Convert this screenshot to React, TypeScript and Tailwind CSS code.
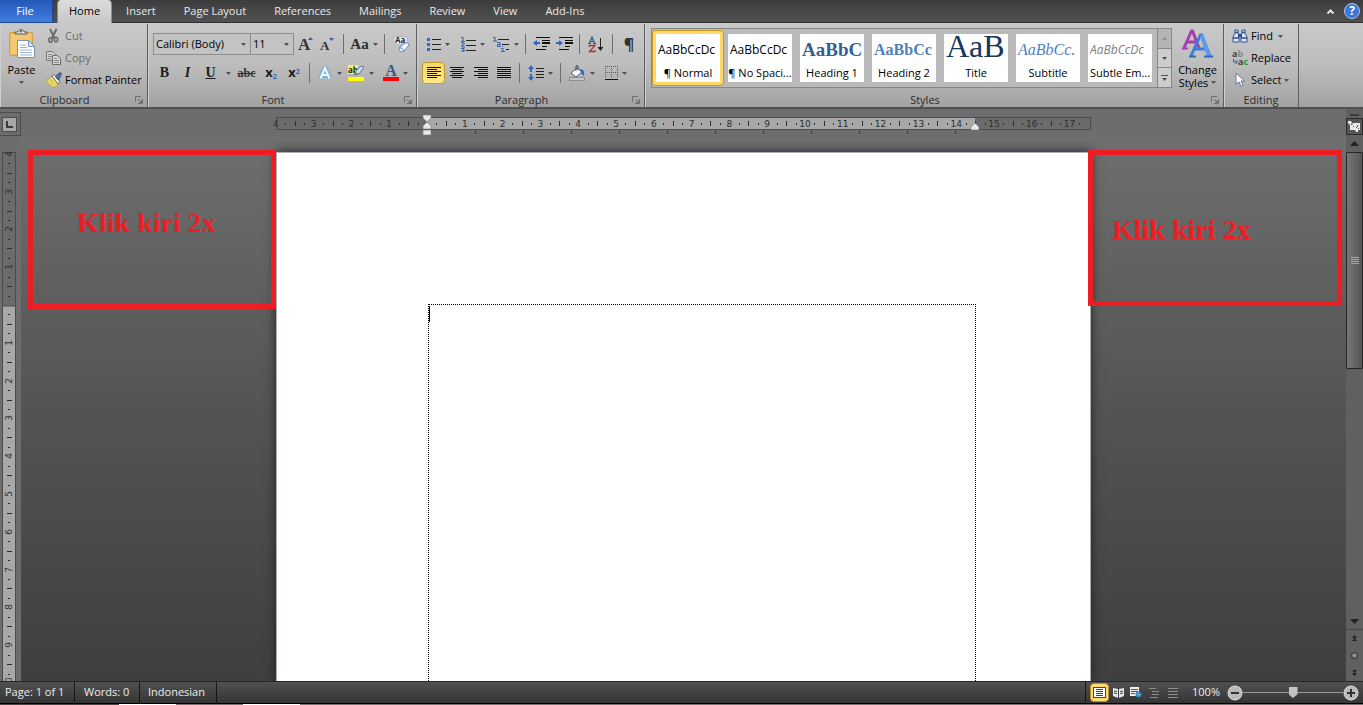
import { useState } from "react";
import type { ReactNode } from "react";
import clsx from "clsx";

const TABS = ["Home", "Insert", "Page Layout", "References", "Mailings", "Review", "View", "Add-Ins"];

const STYLES = [
  { name: "¶ Normal", sample: "AaBbCcDc", look: "text-xs leading-4 text-black" },
  { name: "¶ No Spaci...", sample: "AaBbCcDc", look: "text-xs leading-4 text-black" },
  {
    name: "Heading 1",
    sample: "AaBbC",
    look: "font-['Liberation_Serif',serif] text-[19px] leading-6 font-bold text-[#365f91]",
  },
  {
    name: "Heading 2",
    sample: "AaBbCc",
    look: "font-['Liberation_Serif',serif] text-[16px] leading-6 font-bold text-[#4f81bd]",
  },
  {
    name: "Title",
    sample: "AaB",
    look: "self-start font-['Liberation_Serif',serif] text-[32px] leading-6 text-[#17365d]",
  },
  {
    name: "Subtitle",
    sample: "AaBbCc.",
    look: "font-['Liberation_Serif',serif] text-[16px] leading-6 italic text-[#4f81bd]",
  },
  { name: "Subtle Em...", sample: "AaBbCcDc", look: "text-xs leading-4 italic text-[#808080]" },
];

// One centimetre on the rulers, in pixels
const CM = 37.8;

function Caret() {
  return (
    <svg width="5" height="3" viewBox="0 0 5 3" className="shrink-0" aria-hidden="true">
      <path d="M0 0h5L2.500 3z" fill="#505050" />
    </svg>
  );
}

function Separator({ className = "mx-1" }: { className?: string }) {
  return <span className={clsx("h-5 w-px shrink-0 bg-[#6e6e6e]", className)} />;
}

function Tool({
  label,
  className,
  caret = false,
  active = false,
  children,
}: {
  label: string;
  className: string;
  caret?: boolean;
  active?: boolean;
  children?: ReactNode;
}) {
  return (
    <button
      type="button"
      aria-label={label}
      className={clsx(
        "flex h-[22px] shrink-0 items-center justify-center gap-1",
        active && "rounded-sm border border-[#c29b29] bg-linear-to-b from-[#fbd766] to-[#ffe98a]",
        className
      )}
    >
      {children}
      {caret && <Caret />}
    </button>
  );
}

function Group({
  title,
  launcher = false,
  className,
  children,
}: {
  title: string;
  launcher?: boolean;
  className?: string;
  children: ReactNode;
}) {
  return (
    <section
      aria-label={title}
      className={clsx("flex shrink-0 flex-col border-r border-[#5e5e5e] shadow-[inset_1px_0_0_#cfcfcf]", className)}
    >
      <div className="flex-1">{children}</div>
      <div className="flex h-[14px] items-center text-[#2b2b2b]">
        <span className="flex-1 text-center">{title}</span>
        {launcher && (
          <button type="button" aria-label={`${title} options`} className="flex w-[18px] justify-end pr-1">
            <svg width="8" height="8" viewBox="0 0 8 8">
              <path d="M.5 6V.5H6" fill="none" stroke="#6f6f6f" />
              <path d="M3 3l4 4M7.500 3v4.500H3" fill="none" stroke="#6f6f6f" />
              <path d="M7 4v3H4z" fill="#6f6f6f" />
            </svg>
          </button>
        )}
      </div>
    </section>
  );
}

/* ---------- icons ---------- */

function PasteIcon() {
  return (
    <svg width="28" height="30" viewBox="0 0 28 30" aria-hidden="true">
      <rect x="1.500" y="3.500" width="23" height="23" rx="1.500" fill="#eebb5f" stroke="#d79c3c" />
      <rect x="3" y="5" width="20" height="20" fill="#f3c672" />
      <path d="M7 5h12v-2h-3c0-3-6-3-6 0H7z" fill="#e8e8e8" stroke="#555" />
      <circle cx="13" cy="2.500" r="1" fill="#444" />
      <path d="M9.500 11.500h11l6 6v11h-17z" fill="#fff" stroke="#7e93ad" />
      <path d="M20.500 11.500v6h6z" fill="#dfe8f3" stroke="#7e93ad" />
      <path d="M12 16h6M12 18.500h7M12 21h12M12 23.500h12M12 26h12" stroke="#9db4d3" />
    </svg>
  );
}

function CutIcon() {
  return (
    <svg width="16" height="16" viewBox="0 0 16 16" aria-hidden="true">
      <path d="M4 1l4.500 9M10.500 1L6 10" stroke="#6a6a6a" strokeWidth="2" fill="none" />
      <ellipse cx="4.500" cy="12" rx="1.700" ry="2.300" fill="none" stroke="#6a6a6a" strokeWidth="1.600" />
      <ellipse cx="10" cy="11.500" rx="1.700" ry="2.300" fill="none" stroke="#6a6a6a" strokeWidth="1.600" />
    </svg>
  );
}

function CopyIcon() {
  return (
    <svg width="16" height="16" viewBox="0 0 16 16" aria-hidden="true">
      <path d="M.5 1.500h6l3 3v6h-9z" fill="#cfcfcf" stroke="#7b7b7b" />
      <path d="M2 4.500h4M2 6.500h4M2 8.500h3" stroke="#8b8b8b" />
      <path d="M6.500 5.500h5l3 3v6h-8z" fill="#d4d4d4" stroke="#6b6b6b" />
      <path d="M8 8.500h3M8 10.500h5M8 12.500h5" stroke="#8b8b8b" />
    </svg>
  );
}

function PainterIcon() {
  return (
    <svg width="16" height="16" viewBox="0 0 16 16" aria-hidden="true">
      <path d="M0 8q4 0 6-4l6 8q-2 3-5 3.500Q2 13 0 8z" fill="#f2df6a" stroke="#a98f22" strokeWidth=".6" />
      <path d="M3 8.500l4 5M5 7l4 6" stroke="#c7ac3c" strokeWidth=".8" />
      <path d="M6 4l2-1.500 6 7.500-2 2z" fill="#f0f2f6" stroke="#4c5665" strokeWidth=".8" />
      <path d="M9.500 4.500L13 1q3-1 2 2l-2.500 5z" fill="#57749f" stroke="#2b3a52" strokeWidth=".8" />
    </svg>
  );
}

function GrowIcon({ shrink = false }: { shrink?: boolean }) {
  return (
    <svg width="16" height="18" viewBox="0 0 16 18" aria-hidden="true">
      <text
        x="0"
        y="15"
        fontFamily="Liberation Serif, serif"
        fontWeight="bold"
        fontSize={shrink ? 13 : 17}
        fill="#333"
      >
        A
      </text>
      {shrink ? <path d="M9 3h5l-2.500 3z" fill="#2f5fb0" /> : <path d="M10 5h5l-2.500-3z" fill="#2f5fb0" />}
    </svg>
  );
}

function ClearIcon() {
  return (
    <svg width="17" height="17" viewBox="0 0 17 17" aria-hidden="true">
      <rect x="1" y="1" width="13" height="7" fill="#f4f6fa" stroke="#8ba0c0" strokeWidth=".6" />
      <text x="2" y="7" fontFamily="Open Sans, sans-serif" fontWeight="bold" fontSize="8" fill="#222">
        Aa
      </text>
      <path d="M6 12l6-5q4-1 4 2l-5 6q-5 2-5-3z" fill="#f1f5fc" stroke="#6d87b3" />
      <path d="M6 11.500q4 0 5 3.500" fill="none" stroke="#6d87b3" />
    </svg>
  );
}

function HighlightIcon() {
  return (
    <svg width="17" height="18" viewBox="0 0 17 18" aria-hidden="true">
      <rect width="10" height="9" y="1" fill="#f5ef6e" />
      <text x="0" y="9" fontFamily="Open Sans, sans-serif" fontWeight="bold" fontSize="8" fill="#222">
        ab
      </text>
      <path d="M6 11l2-4 5-5 3 1-5 7z" fill="#cfe0f5" stroke="#42608f" strokeWidth=".8" />
      <path d="M6 11l2-3 2 2z" fill="#8a7f2c" />
      <rect y="13" width="16" height="4" fill="#ff0" />
    </svg>
  );
}

function FontColorIcon() {
  return (
    <svg width="16" height="18" viewBox="0 0 16 18" aria-hidden="true">
      <text
        x="8"
        y="12"
        textAnchor="middle"
        fontFamily="Liberation Serif, serif"
        fontWeight="bold"
        fontSize="16"
        fill="#35588f"
      >
        A
      </text>
      <rect y="13" width="16" height="4" fill="#f00" />
    </svg>
  );
}

function EffectsIcon() {
  return (
    <svg width="16" height="18" viewBox="0 0 16 18" aria-hidden="true">
      <path
        d="M3.500 14L8 4l4.500 10M5.500 11h5"
        fill="none"
        stroke="#68b4e3"
        strokeWidth="5"
        strokeLinejoin="round"
        opacity=".8"
      />
      <path d="M3.500 14.500L8 4l4.500 10.500M5.500 11h5" fill="none" stroke="#f0f7fc" strokeWidth="2" />
    </svg>
  );
}

function BulletsIcon() {
  return (
    <svg width="14" height="14" viewBox="0 0 14 14" aria-hidden="true">
      <path d="M0 1h3v3H0zM0 6h3v3H0zM0 11h3v3H0z" fill="#3a69b8" />
      <path d="M5 2.500h9M5 7.500h9M5 12.500h9" stroke="#222" />
    </svg>
  );
}

function NumberingIcon() {
  return (
    <svg width="15" height="15" viewBox="0 0 15 15" aria-hidden="true">
      <path
        d="M0 .5h2V4M0 4.500h4M0 6h3v2H1v2h3M0 11.500h3V15H0M1 13.500h2"
        fill="none"
        stroke="#2f5fb0"
      />
      <path d="M5 3.500h10M5 8.500h10M5 13.500h10" stroke="#222" />
    </svg>
  );
}

function MultilevelIcon() {
  return (
    <svg width="17" height="16" viewBox="0 0 17 16" aria-hidden="true">
      <path d="M0 1.500h2V5M0 5h4" fill="none" stroke="#2f5fb0" />
      <path d="M4 6.500h3v4H4.500v-2H7" fill="none" stroke="#2f5fb0" />
      <path d="M9.500 10v1M8 12.500h2V15M8 15.500h4" fill="none" stroke="#2f5fb0" />
      <path d="M5 3.500h11M9 8.500h7M13 13.500h3" stroke="#222" />
    </svg>
  );
}

function IndentIcon({ out = false }: { out?: boolean }) {
  return (
    <svg width="17" height="14" viewBox="0 0 17 14" aria-hidden="true">
      <path d="M3 .5h14M9 3.500h8M9 9.500h5M3 12.500h10" stroke="#111" />
      <path d="M9 6h8" stroke="#111" strokeWidth="2" />
      {out ? (
        <path d="M0 6l4-3v2h3v2H4v2z" fill="#2f66c4" />
      ) : (
        <path d="M7 6L3 3v2H0v2h3v2z" fill="#2f66c4" />
      )}
    </svg>
  );
}

function SortIcon() {
  return (
    <svg width="16" height="17" viewBox="0 0 16 17" aria-hidden="true">
      <path d="M0 7.500h3M5 7.500h3M1.500 7L4 1l2.500 6M2.500 5.500h3" fill="none" stroke="#2f5396" strokeWidth="1.200" />
      <path d="M1.500 11V9.500H7L1.500 15.500H7V14" fill="none" stroke="#a03a3a" strokeWidth="1.300" />
      <path d="M12.500 2v12" stroke="#222" />
      <path d="M9.500 11h6l-3 4z" fill="#222" />
    </svg>
  );
}

const ALIGN_LINES = {
  left: "M0 1h14M0 3h10M0 5h14M0 7h10M0 9h14M0 11h10",
  center: "M0 1h14M2 3h10M0 5h14M2 7h10M0 9h14M2 11h10",
  right: "M0 1h14M4 3h10M0 5h14M4 7h10M0 9h14M4 11h10",
  justify: "M0 1h14M0 3h14M0 5h14M0 7h14M0 9h14M0 11h14",
};

function AlignIcon({ kind }: { kind: keyof typeof ALIGN_LINES }) {
  return (
    <svg width="14" height="12" viewBox="0 .5 14 12" aria-hidden="true" shapeRendering="crispEdges">
      <path d={ALIGN_LINES[kind]} stroke="#111" />
    </svg>
  );
}

function SpacingIcon() {
  return (
    <svg width="16" height="16" viewBox="0 0 16 16" aria-hidden="true">
      <path d="M3 3v4M3 9v4" stroke="#2f66c4" strokeWidth="2" />
      <path d="M0 4l3-4 3 4zM0 12l3 4 3-4z" fill="#2f66c4" />
      <path d="M8 3.500h8M8 6.500h8M8 9.500h8M8 12.500h8" stroke="#222" />
    </svg>
  );
}

function ShadingIcon() {
  return (
    <svg width="17" height="16" viewBox="0 0 17 16" aria-hidden="true">
      <path d="M2 8l6-5 5 4-6 5z" fill="#f5f8fc" stroke="#4a5f80" />
      <path d="M7 6V1q1-1 2 0v4" fill="none" stroke="#444" />
      <path d="M11 4q5 0 4 7l-3-3z" fill="#2f66c4" />
      <rect x=".5" y="12.500" width="15" height="3" fill="#c4c4c4" stroke="#8e8e8e" />
    </svg>
  );
}

function BordersIcon() {
  return (
    <svg width="13" height="14" viewBox="0 0 13 14" aria-hidden="true">
      <path d="M.5 0v12M6.500 0v12M12.500 0v12M0 .5h13M0 6.500h13" stroke="#555" strokeDasharray="1 1" />
      <path d="M0 13.500h13" stroke="#111" />
    </svg>
  );
}

function ChangeStylesIcon() {
  return (
    <svg width="32" height="30" viewBox="0 0 32 30" aria-hidden="true">
      <g fill="none" strokeLinejoin="miter">
        <path d="M2 20L9.500 3h1L17 20M5 14h9" stroke="#a63fae" strokeWidth="3" />
        <path d="M0 20.500h6" stroke="#a63fae" strokeWidth="2" />
        <path d="M9 28L18.500 7h1L28 28M13 21h11" stroke="#3f7bd3" strokeWidth="3" />
        <path d="M19.500 7L27 28" stroke="#5c9bee" strokeWidth="4" />
        <path d="M7 28.500h7M22 28.500h9" stroke="#2f66b8" strokeWidth="2" />
      </g>
    </svg>
  );
}

function FindIcon() {
  return (
    <svg width="16" height="14" viewBox="0 0 16 14" aria-hidden="true">
      <path d="M3 1h3v3l1 3v6H1V8l2-4zM10 1h3v3l2 4v5H9V7l1-3z" fill="#dce8f8" stroke="#2b4f8c" />
      <path d="M6 5h4v3H6z" fill="#2b4f8c" />
      <path d="M1 9h6M9 9h6M3 3.500h3M10 3.500h3" stroke="#2b4f8c" strokeWidth="1.500" />
    </svg>
  );
}

function ReplaceIcon() {
  return (
    <svg width="16" height="16" viewBox="0 0 16 16" aria-hidden="true">
      <g fontFamily="Open Sans, sans-serif" fontWeight="bold" fontSize="9">
        <text x="0" y="7" fill="#444">
          a<tspan fill="#8a8a8a">b</tspan>
        </text>
        <text x="6" y="15" fill="#444">
          a<tspan fill="#1f9a2e">c</tspan>
        </text>
      </g>
      <path d="M1.500 9v3H5M3.500 10l2 2-2 2" fill="none" stroke="#3a5fa0" />
    </svg>
  );
}

function CursorIcon() {
  return (
    <svg width="16" height="16" viewBox="0 0 16 16" aria-hidden="true">
      <path d="M4 1v11l3-2 2 4.500 2-1L9 9h3.500z" fill="#fff" stroke="#5a6e92" strokeWidth=".9" />
    </svg>
  );
}

/* ---------- ribbon ---------- */

function TabBar() {
  return (
    <nav className="flex h-[23px] items-stretch bg-linear-to-b from-[#3c3c3c] via-[#484848] to-[#505152] text-[#e9e9e9]">
      <button
        type="button"
        className="w-[53px] border-r border-b border-[#1c4796] bg-linear-to-b from-[#2357b8] to-[#3f7fe0] pr-[2px] text-white"
      >
        File
      </button>
      <div className="ml-1 flex flex-1">
        {TABS.map((tab) => (
          <a
            key={tab}
            href="#ribbon"
            className={clsx(
              "flex items-center",
              tab === "Home"
                ? "rounded-t-sm border-x border-[#8f8f8f] bg-linear-to-b from-[#dcdcdc] to-[#c8c8c8] px-[11px] text-black"
                : "border-b border-[#303030] px-[14px]"
            )}
          >
            {tab}
          </a>
        ))}
        <div className="flex flex-1 items-center justify-end gap-[9px] border-b border-[#303030] pr-[3px]">
          <button type="button" aria-label="Minimize the Ribbon">
            <svg width="9" height="7" viewBox="0 0 9 7">
              <path d="M1.500 5.500l3-3 3 3" fill="none" stroke="#e6e6e6" strokeWidth="2" />
            </svg>
          </button>
          <button
            type="button"
            aria-label="Help"
            className="flex size-4 items-center justify-center rounded-full border border-[#a9c6f2] bg-[#3c78d8] text-xs font-bold text-white"
          >
            ?
          </button>
        </div>
      </div>
    </nav>
  );
}

function ClipboardGroup() {
  return (
    <Group title="Clipboard" launcher className="w-[148px]">
      <div className="flex pt-px">
        <button type="button" className="flex w-[43px] flex-col items-center pt-1 leading-4">
          <PasteIcon />
          <span className="mt-[3px]">Paste</span>
          <span className="mt-[3px]">
            <Caret />
          </span>
        </button>
        <div className="flex flex-col pl-[3px]">
          <button type="button" className="flex h-[22px] items-center gap-[3px] text-[#6b6b6b]">
            <CutIcon />
            Cut
          </button>
          <button type="button" className="flex h-[22px] items-center gap-[3px] text-[#6b6b6b]">
            <CopyIcon />
            Copy
          </button>
          <button type="button" className="flex h-[22px] items-center gap-[3px] whitespace-nowrap">
            <PainterIcon />
            Format Painter
          </button>
        </div>
      </div>
    </Group>
  );
}

function FontGroup() {
  return (
    <Group title="Font" launcher className="w-[269px]">
      <div className="flex flex-col gap-[7px] pt-[9px] pl-[5px]">
        <div className="flex items-center">
          <label className="flex h-[22px] w-[98px] items-center border border-[#8d8d8d] bg-[#c3c3c3] pr-1 pl-[2px]">
            <select aria-label="Font" className="w-full flex-1 appearance-none outline-none">
              <option>Calibri (Body)</option>
            </select>
            <Caret />
          </label>
          <label className="flex h-[22px] w-[43px] items-center border border-l-0 border-[#8d8d8d] bg-[#c3c3c3] pr-1 pl-[2px]">
            <select aria-label="Font size" className="w-full flex-1 appearance-none outline-none">
              <option>11</option>
            </select>
            <Caret />
          </label>
          <Tool label="Grow Font" className="ml-px w-[22px]">
            <GrowIcon />
          </Tool>
          <Tool label="Shrink Font" className="w-[22px]">
            <GrowIcon shrink />
          </Tool>
          <Separator />
          <Tool
            label="Change Case"
            className="w-8 font-['Liberation_Serif',serif] text-[15px] font-bold text-[#2b2b2b]"
            caret
          >
            Aa
          </Tool>
          <Separator />
          <Tool label="Clear Formatting" className="w-6">
            <ClearIcon />
          </Tool>
        </div>
        <div className="flex items-center font-['Liberation_Serif',serif] text-[#1c1c1c]">
          <Tool label="Bold" className="w-[23px] text-sm font-bold">
            B
          </Tool>
          <Tool label="Italic" className="w-[23px] text-sm font-bold italic">
            I
          </Tool>
          <Tool label="Underline" className="w-[23px] text-sm font-bold underline">
            U
          </Tool>
          <Tool label="Underline style" className="w-3" caret />
          <Tool label="Strikethrough" className="w-[25px] text-xs font-semibold text-[#333] line-through">
            abc
          </Tool>
          <Tool label="Subscript" className="w-6 font-['Open_Sans',sans-serif] text-[13px] font-bold">
            <span>
              x<sub className="text-[7px] text-[#2f66c4]">2</sub>
            </span>
          </Tool>
          <Tool label="Superscript" className="w-[22px] font-['Open_Sans',sans-serif] text-[13px] font-bold">
            <span>
              x<sup className="text-[7px] text-[#2f66c4]">2</sup>
            </span>
          </Tool>
          <Separator />
          <Tool label="Text Effects" className="w-[30px]" caret>
            <EffectsIcon />
          </Tool>
          <Tool label="Text Highlight Color" className="w-[34px]" caret>
            <HighlightIcon />
          </Tool>
          <Tool label="Font Color" className="w-[34px]" caret>
            <FontColorIcon />
          </Tool>
        </div>
      </div>
    </Group>
  );
}

function ParagraphGroup() {
  return (
    <Group title="Paragraph" launcher className="w-[228px]">
      <div className="flex flex-col gap-[7px] pt-[9px] pl-[5px]">
        <div className="flex items-center">
          <Tool label="Bullets" className="w-[33px]" caret>
            <BulletsIcon />
          </Tool>
          <Tool label="Numbering" className="w-[35px]" caret>
            <NumberingIcon />
          </Tool>
          <Tool label="Multilevel List" className="w-[31px]" caret>
            <MultilevelIcon />
          </Tool>
          <Separator />
          <Tool label="Decrease Indent" className="w-[23px]">
            <IndentIcon out />
          </Tool>
          <Tool label="Increase Indent" className="w-[23px]">
            <IndentIcon />
          </Tool>
          <Separator className="mx-[3px]" />
          <Tool label="Sort" className="w-[26px]">
            <SortIcon />
          </Tool>
          <Separator className="mx-[3px]" />
          <Tool label="Show/Hide ¶" className="w-[26px] text-base font-bold text-[#333]">
            ¶
          </Tool>
        </div>
        <div className="flex items-center">
          <Tool label="Align Left" className="w-[23px]" active>
            <AlignIcon kind="left" />
          </Tool>
          <Tool label="Center" className="w-6">
            <AlignIcon kind="center" />
          </Tool>
          <Tool label="Align Right" className="w-[23px]">
            <AlignIcon kind="right" />
          </Tool>
          <Tool label="Justify" className="w-6">
            <AlignIcon kind="justify" />
          </Tool>
          <Separator className="mx-[3px]" />
          <Tool label="Line Spacing" className="w-[34px]" caret>
            <SpacingIcon />
          </Tool>
          <Separator className="mx-[3px]" />
          <Tool label="Shading" className="w-[35px]" caret>
            <ShadingIcon />
          </Tool>
          <Tool label="Borders" className="w-[33px]" caret>
            <BordersIcon />
          </Tool>
        </div>
      </div>
    </Group>
  );
}

function StylesGroup() {
  const [current, setCurrent] = useState(0);

  return (
    <Group title="Styles" launcher className="w-[579px]">
      <div className="flex pt-1 pl-[6px]">
        <div className="flex h-[60px] w-[521px] border border-[#868686] bg-[#bababa]">
          {STYLES.map((style, index) => (
            <button
              key={style.name}
              type="button"
              onClick={() => setCurrent(index)}
              className={clsx(
                "my-px h-14 w-[72px] shrink-0 rounded-sm p-1",
                index === current && "bg-[#ffd86a] shadow-[inset_0_0_0_1px_#c29b29]"
              )}
            >
              <span className="flex h-12 flex-col bg-white text-black">
                <span className="mx-[2px] flex h-[31px] items-center overflow-hidden">
                  <span className={clsx("whitespace-nowrap", style.look)}>{style.sample}</span>
                </span>
                <span className="text-center leading-4 whitespace-nowrap">{style.name}</span>
              </span>
            </button>
          ))}
          <div className="ml-px flex flex-1 flex-col divide-y divide-[#868686] border-l border-[#868686] bg-[#cdcdcd]">
            <button
              type="button"
              aria-label="Previous styles"
              className="flex flex-1 items-center justify-center bg-[#b4b4b4]"
            >
              <svg width="5" height="3" viewBox="0 0 5 3">
                <path d="M0 3h5L2.500 0z" fill="#8e8e8e" />
              </svg>
            </button>
            <button type="button" aria-label="Next styles" className="flex flex-1 items-center justify-center">
              <Caret />
            </button>
            <button
              type="button"
              aria-label="More styles"
              className="flex flex-1 flex-col items-center justify-center gap-[2px]"
            >
              <span className="h-px w-[7px] bg-[#505050]" />
              <Caret />
            </button>
          </div>
        </div>
        <button type="button" className="flex flex-1 flex-col items-center leading-[13px]">
          <ChangeStylesIcon />
          <span className="mt-[5px]">Change</span>
          <span className="flex items-center gap-[3px]">
            Styles <Caret />
          </span>
        </button>
      </div>
    </Group>
  );
}

function EditingGroup() {
  return (
    <Group title="Editing" className="w-[75px]">
      <div className="flex flex-col pt-px pl-2">
        <button type="button" className="flex h-[22px] items-center gap-[3px]">
          <FindIcon />
          Find
          <span className="ml-[2px]">
            <Caret />
          </span>
        </button>
        <button type="button" className="flex h-[22px] items-center gap-[3px]">
          <ReplaceIcon />
          Replace
        </button>
        <button type="button" className="flex h-[22px] items-center gap-[3px]">
          <CursorIcon />
          Select
          <Caret />
        </button>
      </div>
    </Group>
  );
}

/* ---------- workspace ---------- */

// Numbers on the centimetres, a dash on each half and a dot on each quarter
function HorizontalRuler() {
  const zero = 151;
  const marks = Array.from({ length: 22 }, (_, i) => i - 4);
  const stops = Array.from({ length: 11 }, (_, i) => zero + 48 * (i + 1));

  return (
    <svg width="831" height="26" viewBox="-8 0 831 26" className="block" role="img" aria-label="Horizontal ruler">
      <rect x=".5" y="8.500" width="814" height="12" fill="#6b6b6b" stroke="#4c4c4c" />
      <rect x={zero} y="9" width="548" height="11" fill="#a8a8a8" />
      {marks.map((cm) => {
        const x = zero + cm * CM;
        return (
          <g key={cm} fill="#2e2e2e">
            {cm !== 0 && (
              <text x={x} y="18" textAnchor="middle" fontSize="9" fontFamily="DejaVu Sans, sans-serif">
                {Math.abs(cm)}
              </text>
            )}
            <rect x={Math.round(x + CM / 4)} y="14" width="1" height="2" />
            {cm < 17 && (
              <>
                <rect x={Math.round(x + CM / 2)} y="12" width="1" height="5" />
                <rect x={Math.round(x + (CM * 3) / 4)} y="14" width="1" height="2" />
              </>
            )}
          </g>
        );
      })}
      {stops.map((x) => (
        <rect key={x} x={x} y="22" width="1" height="3" fill="#333" />
      ))}
      <g fill="#e8e8e8" stroke="#777" strokeWidth=".6">
        <path d="M147 6h8v3l-4 4-4-4z" />
        <path d="M147 20v-3l4-4 4 4v3z" />
        <path d="M147 21h8v5h-8z" />
        <path d="M695 21v-3l4-4 4 4v3z" />
      </g>
    </svg>
  );
}

function VerticalRuler() {
  const zero = 154;
  const marks = Array.from({ length: 40 }, (_, i) => i - 4);

  return (
    <svg width="14" height="1500" viewBox="0 0 14 1500" className="block" role="img" aria-label="Vertical ruler">
      <rect x=".5" y=".5" width="13" height="1520" fill="#6b6b6b" stroke="#4c4c4c" />
      <rect x="1" y={zero} width="12" height="1500" fill="#a8a8a8" />
      <path d={`M0 ${zero}h14`} stroke="#4c4c4c" />
      {marks.map((cm) => {
        const y = zero - 1 + cm * CM;
        return (
          <g key={cm} fill="#2e2e2e">
            {cm !== 0 && (
              <text
                transform={`translate(10 ${Math.round(y)}) rotate(-90)`}
                textAnchor="middle"
                fontSize="9"
                fontFamily="DejaVu Sans, sans-serif"
              >
                {Math.abs(cm)}
              </text>
            )}
            <rect x="6" y={Math.round(y + CM / 4)} width="2" height="1" />
            <rect x="5" y={Math.round(y + CM / 2)} width="5" height="1" />
            <rect x="6" y={Math.round(y + (CM * 3) / 4)} width="2" height="1" />
          </g>
        );
      })}
    </svg>
  );
}

function Callout({ className }: { className: string }) {
  return (
    <div
      className={clsx(
        "relative border-5 border-[#ee1c23] font-['Liberation_Serif',serif] text-[28px] leading-8 font-bold text-[#ee1c23]",
        className
      )}
    >
      Klik kiri 2x
    </div>
  );
}

function ScrollBar() {
  return (
    <div className="flex w-[17px] shrink-0 flex-col items-center bg-[#606060] pt-[5px]">
      <span className="h-[2px] w-[9px] bg-[#3c3c3c]" />
      <button
        type="button"
        aria-label="View Ruler"
        className="mt-[2px] flex h-[17px] w-full items-center justify-center border border-[#2a2a2a] bg-[#555]"
      >
        <svg width="13" height="11" viewBox="0 0 13 11">
          <path d="M0 0h3l1 2h8v7h-2v2H8L7 9H2V4L0 2z" fill="#e9e9ee" />
          <path d="M3 3.500h1M5 5.500h1M4 2v2M8 6.500h1M9.500 4v2M10 7.500h1" stroke="#555" />
        </svg>
      </button>
      <button type="button" aria-label="Scroll up" className="flex h-[17px] w-full items-center justify-center">
        <svg width="9" height="5" viewBox="0 0 9 5">
          <path d="M0 5h9L4.500 0z" fill="#222" />
        </svg>
      </button>
      <div className="w-full flex-1">
        <div className="flex h-[47%] flex-col items-center justify-center gap-px rounded-[1px] border border-[#262626] bg-linear-to-r from-[#777] to-[#555]">
          {[0, 1, 2, 3].map((line) => (
            <span key={line} className="h-px w-2 bg-[#a5a5a5]" />
          ))}
        </div>
      </div>
      <button
        type="button"
        aria-label="Scroll down"
        className="flex h-4 w-full items-center justify-center border-b border-[#484848]"
      >
        <svg width="9" height="5" viewBox="0 0 9 5">
          <path d="M0 0h9L4.500 5z" fill="#222" />
        </svg>
      </button>
      <button type="button" aria-label="Previous Page" className="flex h-[17px] w-full items-center justify-center">
        <svg width="7" height="7" viewBox="0 0 7 7">
          <path d="M1 3h5L3.500 0zM1 6h5L3.500 3z" fill="#222" />
        </svg>
      </button>
      <button
        type="button"
        aria-label="Select Browse Object"
        className="flex h-[17px] w-full items-center justify-center"
      >
        <span className="size-[7px] rounded-full border border-[#262626] bg-[#8a8a8a]" />
      </button>
      <button type="button" aria-label="Next Page" className="flex h-[17px] w-full items-center justify-center">
        <svg width="7" height="7" viewBox="0 0 7 7">
          <path d="M1 1h5L3.500 4zM1 4h5L3.500 7z" fill="#222" />
        </svg>
      </button>
    </div>
  );
}

function Workspace() {
  return (
    <main className="flex min-h-0 flex-1 bg-[#6d6d6d]">
      <div className="flex w-[21px] shrink-0 flex-col overflow-hidden">
        <button
          type="button"
          aria-label="Tab selector"
          className="mt-[3px] flex h-6 w-full shrink-0 items-center border border-l-0 border-[#4c4c4c] pl-[2px]"
        >
          <span className="flex size-[15px] items-center justify-center border border-[#4c4c4c] bg-[#a8a8a8]">
            <svg width="7" height="7" viewBox="0 0 7 7">
              <path d="M1 0v6h6" fill="none" stroke="#3a3a3a" strokeWidth="2" />
            </svg>
          </span>
        </button>
        <div className="mt-4 min-h-0 flex-1 overflow-hidden pl-[2px]">
          <VerticalRuler />
        </div>
      </div>

      <div className="flex min-w-0 flex-1 flex-col">
        <div className="flex h-[27px] shrink-0 justify-center">
          <HorizontalRuler />
        </div>
        <div className="grid min-h-0 flex-1 grid-cols-[minmax(0,1fr)_815px_minmax(0,1fr)] overflow-hidden bg-linear-to-b from-[#6f6f6f] via-[#545454] to-[#3f3f3f]">
          <div className="pt-[14px] pl-[7px]">
            <Callout className="h-[159px] pt-[52px] pl-11" />
          </div>
          <article className="mt-4 border border-b-0 border-[#a9b0b8] bg-white px-[151px] pt-[151px] shadow-[0_0_10px_#222]">
            <div
              contentEditable
              suppressContentEditableWarning
              role="textbox"
              aria-label="Document"
              className="h-full w-[548px] border border-b-0 border-dotted border-black pt-px outline-none"
            >
              <span className="block h-4 w-px bg-black" />
            </div>
          </article>
          <div className="pt-[14px] pr-1">
            <Callout className="-ml-[3px] h-[156px] pt-[59px] pl-[19px]" />
          </div>
        </div>
      </div>

      <ScrollBar />
    </main>
  );
}

/* ---------- status bar ---------- */

function StatusBar() {
  const [zoom, setZoom] = useState(50);

  return (
    <footer className="shrink-0 border-t border-[#262626] bg-linear-to-b from-[#505050] to-[#333] text-[#ececec]">
      <div className="flex h-[21px] items-stretch">
        <div className="flex divide-x divide-[#161616]">
          <button type="button" className="w-[75px] pl-[5px] text-left">
            Page: 1 of 1
          </button>
          <button type="button" className="w-[65px] pl-[9px] text-left">
            Words: 0
          </button>
          <button type="button" className="w-[77px] border-r border-[#161616] pl-2 text-left">
            Indonesian
          </button>
        </div>
        <div className="ml-auto flex items-center border-l border-[#161616] pl-1">
          <button
            type="button"
            aria-label="Print Layout"
            className="flex h-[19px] w-[19px] items-center justify-center rounded-sm border border-[#c28c20] bg-[#ffdc70]"
          >
            <svg width="13" height="11" viewBox="0 0 13 11">
              <rect x=".5" y=".5" width="12" height="10" fill="#fff" stroke="#444" />
              <path d="M3 2.500h7M3 4.500h7M3 6.500h7M3 8.500h7" stroke="#444" />
            </svg>
          </button>
          <button type="button" aria-label="Full Screen Reading" className="flex w-[18px] justify-center">
            <svg width="11" height="11" viewBox="0 0 11 11">
              <path d="M0 1l5 1v9l-5-2zM11 1L6 2v9l5-2z" fill="#e6e6e6" />
              <path d="M1 4l3 .5M1 6l3 .5M7 4.500L10 4M7 6.500l3-.5" stroke="#444" />
            </svg>
          </button>
          <button type="button" aria-label="Web Layout" className="flex w-[18px] justify-center">
            <svg width="12" height="11" viewBox="0 0 12 11">
              <path d="M0 0h9v9H0z" fill="#efefef" />
              <path d="M1 2.500h7M1 4.500h7M1 6.500h4" stroke="#555" />
              <circle cx="8.500" cy="7.500" r="3" fill="#3b83c4" />
              <path d="M7 7l2-1 1 2-2 1z" fill="#6fc28a" />
            </svg>
          </button>
          <button type="button" aria-label="Outline" className="flex w-[18px] justify-center">
            <svg width="10" height="10" viewBox="0 0 10 10">
              <path d="M0 .5h7M3 3.500h7M3 6.500h7M1 9.500h8" stroke="#8d8d8d" />
            </svg>
          </button>
          <button type="button" aria-label="Draft" className="flex w-5 justify-center">
            <svg width="10" height="10" viewBox="0 0 10 10">
              <path d="M0 .5h10M0 3.500h10M0 6.500h10M0 9.500h10" stroke="#8d8d8d" />
            </svg>
          </button>
          <button type="button" className="w-[43px] pl-[3px] text-center">
            100%
          </button>
          <button type="button" aria-label="Zoom Out" className="ml-px" onClick={() => setZoom(Math.max(0, zoom - 5))}>
            <svg width="16" height="16" viewBox="0 0 16 16">
              <circle cx="8" cy="8" r="7" fill="#b9b9b9" stroke="#e2e2e2" />
              <path d="M4 8h8" stroke="#333" strokeWidth="2" />
            </svg>
          </button>
          <input
            type="range"
            aria-label="Zoom"
            min="0"
            max="100"
            value={zoom}
            onChange={(event) => setZoom(Number(event.target.value))}
            className="h-4 w-[100px] appearance-none bg-transparent bg-[linear-gradient(#999,#999)] bg-[length:100%_1px] bg-center bg-no-repeat [&::-webkit-slider-thumb]:h-[11px] [&::-webkit-slider-thumb]:w-[9px] [&::-webkit-slider-thumb]:appearance-none [&::-webkit-slider-thumb]:bg-[#c4c4c4] [&::-webkit-slider-thumb]:[clip-path:polygon(0_0,100%_0,100%_65%,50%_100%,0_65%)]"
          />
          <button type="button" aria-label="Zoom In" className="mr-1" onClick={() => setZoom(Math.min(100, zoom + 5))}>
            <svg width="16" height="16" viewBox="0 0 16 16">
              <circle cx="8" cy="8" r="7" fill="#b9b9b9" stroke="#e2e2e2" />
              <path d="M4 8h8M8 4v8" stroke="#333" strokeWidth="2" />
            </svg>
          </button>
        </div>
      </div>
      {/* top edge of the desktop taskbar */}
      <div className="flex h-[2px] border-t border-black bg-[#7a7275]">
        <span className="w-[119px] bg-[#4a4446]" />
        <span className="w-[57px] bg-white" />
        <span className="w-[67px]" />
        <span className="w-[57px] bg-white" />
      </div>
    </footer>
  );
}

export default function App() {
  return (
    <div className="flex h-screen flex-col overflow-hidden font-['Open_Sans','Noto_Sans',sans-serif] text-[11px] text-black">
      <TabBar />
      <div
        id="ribbon"
        className="flex h-[86px] shrink-0 border-b-2 border-[#505050] bg-linear-to-b from-[#c9c9c9] via-[#bdbdbd] to-[#a2a2a2] pt-px"
      >
        <ClipboardGroup />
        <FontGroup />
        <ParagraphGroup />
        <StylesGroup />
        <EditingGroup />
      </div>
      <Workspace />
      <StatusBar />
    </div>
  );
}
